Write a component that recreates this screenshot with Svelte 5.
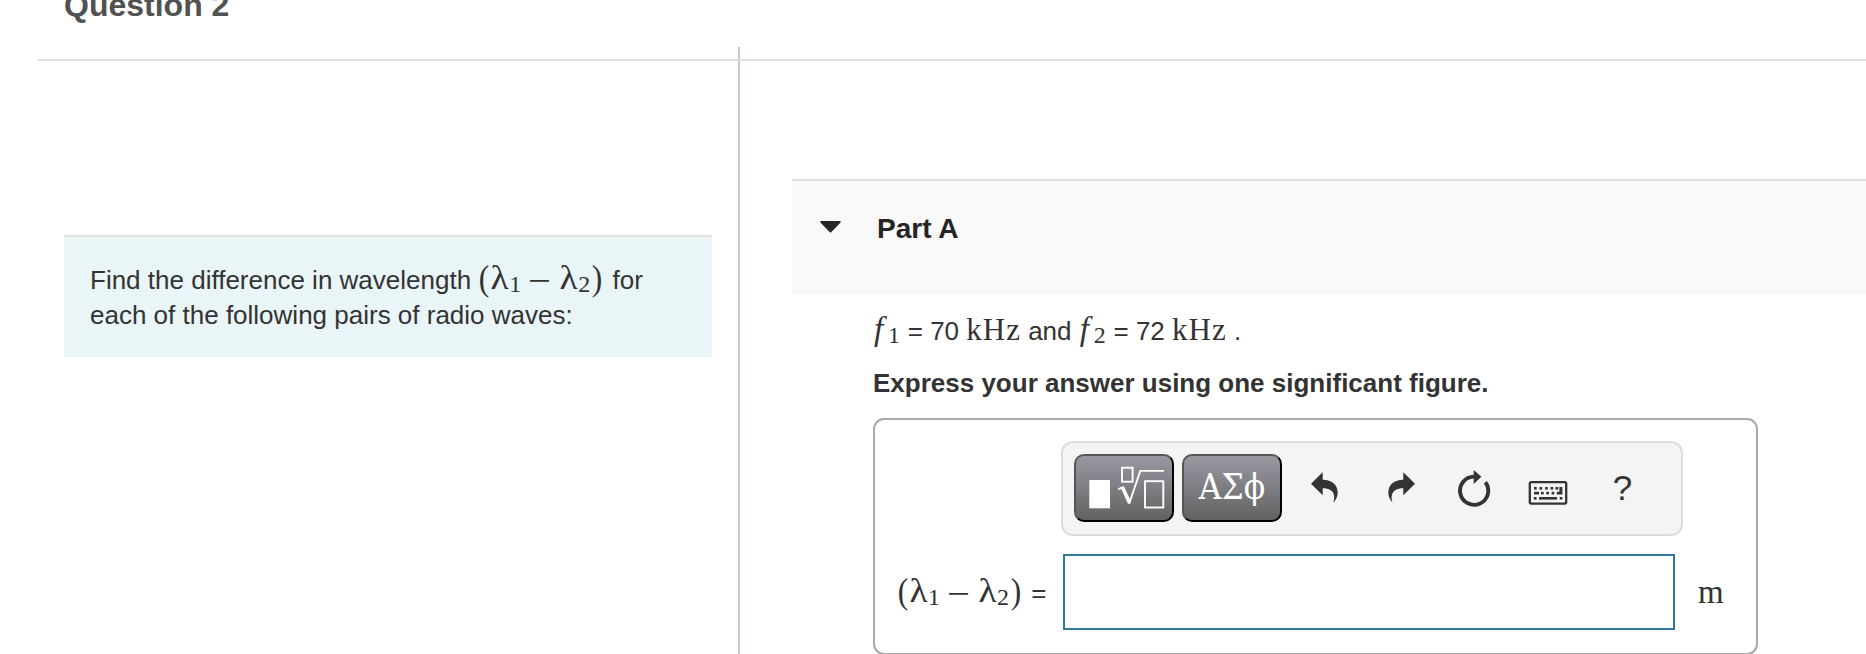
<script>
  let answer = $state("");
  let open = $state(true);

  const arrow =
    "M23 29.7 34.7 18.3V25.7C43.5 25.6 49.7 30.5 49.7 38.5C49.7 42.5 48 46 45.3 48.7C47.5 43 47 34.2 34.7 34.2V41.3Z";

  // keyboard keys: x, y, width
  const keys = [
    [24, 33, 2.7],
    [29.5, 33, 2.7],
    [35, 33, 2.7],
    [40.5, 33, 2.7],
    [45.5, 33, 2.7],
    [24, 37.8, 5],
    [31, 37.8, 2.7],
    [36.3, 37.8, 2.7],
    [41.6, 37.8, 2.7],
    [23.8, 43, 2.7],
    [29, 43, 18],
    [49.7, 43, 2.7],
  ];
</script>

{#snippet wavelengthDiff()}
  <span class="math"><span class="paren">(</span><span class="lambda">λ</span><span class="sub">1</span><span class="minus">−</span><span class="lambda">λ</span><span class="sub">2</span><span class="paren close">)</span></span>
{/snippet}

<div class="page">
  <header class="header">
    <h1>Question 2</h1>
  </header>

  <div class="columns">
    <aside class="left">
      <div class="intro">
        <span class="intro-line">Find the difference in wavelength {@render wavelengthDiff()} for</span>
        <span class="intro-line">each of the following pairs of radio waves:</span>
      </div>
    </aside>

    <main class="right">
      <button class="part-header" aria-expanded={open} onclick={() => (open = !open)}>
        <svg class="caret" viewBox="0 0 21 12">
          <path d="M1.2 0H19.8Q21.5 0.4 20.3 1.8L11.4 11Q10.5 12 9.6 11L0.7 1.8Q-0.5 0.4 1.2 0Z" />
        </svg>
        <span>Part A</span>
      </button>

      {#if open}
        <section class="part">
          <p class="given">
            <span class="math"><span class="func">f</span><span class="sub">1</span></span>
            = 70 <span class="unit">kHz</span> and
            <span class="math"><span class="func">f</span><span class="sub">2</span></span>
            = 72 <span class="unit">kHz</span> .
          </p>
          <p class="instructions">Express your answer using one significant figure.</p>

          <div class="answer-box">
            <div class="toolbar">
              <button class="palette" aria-label="Templates">
                <svg class="template" viewBox="0 0 96 64">
                  <rect x="13.3" y="24" width="20.7" height="28.3" fill="#fff" />
                  <g fill="none" stroke="#fff" stroke-width="1.9">
                    <rect x="46" y="11.7" width="10.6" height="14" />
                    <rect x="69" y="25.2" width="18.3" height="26.3" />
                    <path d="M42.3 33.3 46.5 31.2" />
                    <path d="M53.4 47 64.3 14.9H88" />
                  </g>
                  <path d="M44.6 31.6 47.8 30 53.6 42.5 54.5 47.8H52Z" fill="#fff" />
                </svg>
              </button>
              <button class="palette symbols">ΑΣϕ</button>

              <button class="tool" aria-label="Undo">
                <svg viewBox="0 0 74 68"><path d={arrow} /></svg>
              </button>
              <button class="tool" aria-label="Redo">
                <svg viewBox="0 0 74 68"><path d={arrow} transform="translate(76 0) scale(-1 1)" /></svg>
              </button>
              <button class="tool" aria-label="Reset">
                <svg viewBox="0 0 74 68">
                  <path d="M49.4 28.2A14.1 14.1 0 1 1 38 22.6" fill="none" stroke="#333" stroke-width="3.9" />
                  <path d="M37.7 16 45.4 22.7 37.7 30Z" />
                </svg>
              </button>
              <button class="tool" aria-label="Keyboard shortcuts">
                <svg viewBox="0 0 74 68">
                  <rect x="19.8" y="28.1" width="36.4" height="21.5" rx="1.5" fill="none" stroke="#333" stroke-width="2.3" />
                  {#each keys as [x, y, w]}
                    <rect {x} {y} width={w} height="2.6" />
                  {/each}
                  <path d="M49.4 33H52.4V40.4H46.8V37.8H49.4Z" />
                </svg>
              </button>
              <button class="tool help">?</button>
            </div>

            <div class="answer-row">
              <label for="answer">{@render wavelengthDiff()} =</label>
              <input id="answer" type="text" bind:value={answer} />
              <span class="unit metre">m</span>
            </div>
          </div>
        </section>
      {/if}
    </main>
  </div>
</div>

<style>
  :global(body) {
    margin: 0;
    background: #fff;
  }

  .page {
    height: 654px;
    overflow: hidden;
    display: flex;
    flex-direction: column;
    font-family: "Liberation Sans", Arial, sans-serif;
    font-size: 26px;
    color: #333;
  }

  button {
    font: inherit;
    color: inherit;
    padding: 0;
    border: none;
    background: none;
    cursor: pointer;
  }

  h1,
  p {
    margin: 0;
  }

  .header {
    position: relative;
    z-index: 1;
    box-sizing: border-box;
    flex: none;
    height: 61px;
    margin-left: 38px;
    padding-left: 26px;
    border-bottom: 2px solid #dfdfdf;
  }

  h1 {
    margin-top: -13px;
    font-size: 32px;
    line-height: 37px;
    color: #515151;
  }

  .columns {
    flex: 1;
    display: grid;
    grid-template-columns: 738px 1fr;
    margin-top: -14px;
  }

  .left {
    padding: 188px 26px 0 64px;
  }

  .intro {
    box-sizing: border-box;
    height: 122px;
    padding: 25px 26px 0;
    border-top: 2px solid #dfdfdf;
    background: #eaf5f7;
  }

  .intro-line {
    display: block;
    height: 35px;
    line-height: 36px;
    white-space: nowrap;
  }

  .right {
    min-width: 0;
    padding: 132px 0 0 52px;
    border-left: 2px solid #bccbdd;
  }

  .part-header {
    box-sizing: border-box;
    display: flex;
    align-items: center;
    gap: 36px;
    width: 100%;
    height: 115px;
    padding: 0 0 18px 28px;
    border-top: 2px solid #dfdfdf;
    background: #f9f9f9;
    color: #252525;
    font-size: 28px;
    font-weight: 700;
  }

  .caret {
    width: 21px;
    height: 12px;
    margin-bottom: 3px;
    fill: #252525;
  }

  .part {
    padding-left: 81px;
  }

  .given {
    height: 71px;
    padding-top: 17px;
    box-sizing: border-box;
    line-height: 40px;
    white-space: nowrap;
  }

  .instructions {
    height: 53px;
    line-height: 36px;
    font-weight: 700;
  }

  .math,
  .unit {
    font-family: "Liberation Serif", "Times New Roman", serif;
    font-size: 31px;
    line-height: 1;
  }

  /* glyph boxes are kept short so they don't stretch the text line */
  .math span {
    display: inline-block;
    height: 26px;
    text-align: center;
    line-height: 26px;
  }

  .math .paren {
    width: 12px;
    font-size: 35px;
    transform: translateY(1px) scaleX(0.9);
  }

  .math .close {
    width: 16px;
  }

  .math .lambda {
    width: 19px;
    font-size: 34px;
    transform: scaleX(1.1);
  }

  .math .sub {
    width: 11px;
    font-size: 24px;
    transform: translateY(3px);
  }

  .math .minus {
    width: 39px;
    font-size: 37px;
    transform: translateY(4px) scaleX(1.1);
  }

  .math .func {
    width: 15px;
    font-style: italic;
    font-size: 33px;
    transform: translateX(-2px);
  }

  .given .sub {
    margin-right: 1.5px;
  }

  .unit {
    letter-spacing: 1px;
  }

  .metre {
    font-size: 33px;
  }

  .answer-box {
    box-sizing: border-box;
    width: 885px;
    height: 237px;
    padding: 21px 0 0 22px;
    border: 2px solid #a9a9a9;
    border-radius: 11px;
  }

  .toolbar {
    box-sizing: border-box;
    display: flex;
    align-items: center;
    width: 622px;
    height: 95px;
    margin-left: 164px;
    padding: 0 11px 1px;
    border: 2px solid #dcdcdc;
    border-radius: 12px;
    background: #f4f4f4;
  }

  .palette {
    box-sizing: border-box;
    flex: none;
    width: 100px;
    height: 68px;
    margin-right: 8px;
    border: 2px solid;
    border-color: #555 #000 #000 #555;
    border-radius: 10px;
    background: linear-gradient(#9a98a2, #626262);
    color: #fff;
  }

  .symbols {
    margin-right: 6px;
    padding-bottom: 3px;
    font-family: "DejaVu Serif Condensed", "DejaVu Serif", serif;
    font-size: 35px;
  }

  .template {
    display: block;
    width: 96px;
    height: 64px;
  }

  .tool {
    flex: none;
    width: 74px;
    height: 68px;
  }

  .tool svg {
    display: block;
    fill: #333;
  }

  .help {
    padding-left: 3px;
    font-size: 35px;
  }

  .answer-row {
    display: flex;
    align-items: center;
    height: 76px;
    margin-top: 18px;
  }

  label {
    width: 166px;
    white-space: nowrap;
  }

  input {
    box-sizing: border-box;
    width: 612px;
    height: 76px;
    margin-right: 23px;
    padding: 0 12px;
    border: 2px solid #317a9c;
    border-radius: 0;
    outline: none;
    font: inherit;
  }
</style>
